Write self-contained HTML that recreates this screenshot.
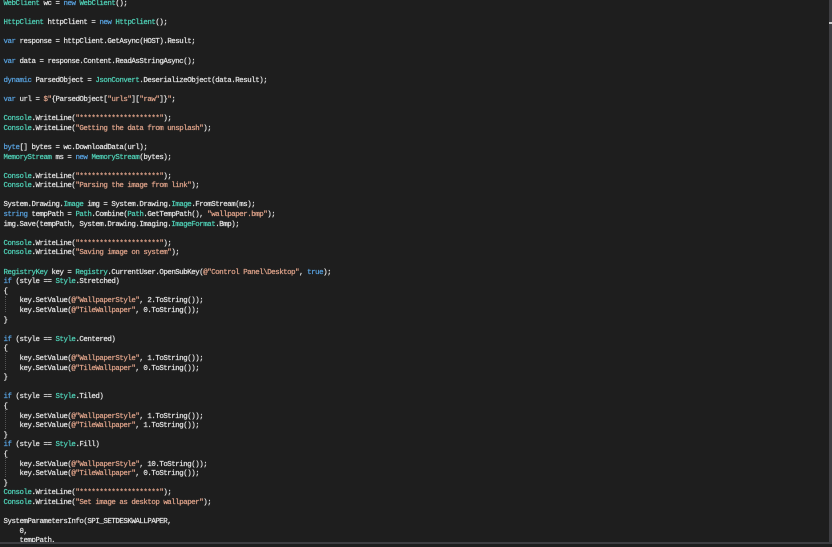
<!DOCTYPE html>
<html><head><meta charset="utf-8">
<style>
html,body{margin:0;padding:0;background:#1e1e1e;width:832px;height:544px;overflow:hidden}
pre{position:absolute;left:3.5px;top:0;margin:0;font-family:"Liberation Mono",monospace;font-size:7.4px;letter-spacing:-.44px;line-height:9.6px;color:#dcdcdc;filter:blur(.3px);-webkit-text-stroke:.15px currentColor;text-shadow:0 0 .4px currentColor}
.t{color:#4ec9b0}.k{color:#569cd6}.s{color:#d69d85}
.g{position:absolute;left:5px;width:0;border-left:1px dotted #555}
#r{position:absolute;left:829px;top:0;width:3px;height:544px;background:#3e3e42}
#b{position:absolute;left:0;top:542px;width:832px;height:2px;background:#3e3e42}
#m{position:absolute;left:829px;top:22px;width:3px;height:2px;background:#c8c8c8}
</style></head><body>
<pre><span class="t">WebClient</span> wc = <span class="k">new</span> <span class="t">WebClient</span>();

<span class="t">HttpClient</span> httpClient = <span class="k">new</span> <span class="t">HttpClient</span>();

<span class="k">var</span> response = httpClient.GetAsync(HOST).Result;

<span class="k">var</span> data = response.Content.ReadAsStringAsync();

<span class="k">dynamic</span> ParsedObject = <span class="t">JsonConvert</span>.DeserializeObject(data.Result);

<span class="k">var</span> url = <span class="s">$"</span>{ParsedObject[<span class="s">"urls"</span>][<span class="s">"raw"</span>]}<span class="s">"</span>;

<span class="t">Console</span>.WriteLine(<span class="s">"********************"</span>);
<span class="t">Console</span>.WriteLine(<span class="s">"Getting the data from unsplash"</span>);

<span class="k">byte</span>[] bytes = wc.DownloadData(url);
<span class="t">MemoryStream</span> ms = <span class="k">new</span> <span class="t">MemoryStream</span>(bytes);

<span class="t">Console</span>.WriteLine(<span class="s">"********************"</span>);
<span class="t">Console</span>.WriteLine(<span class="s">"Parsing the image from link"</span>);

System.Drawing.<span class="t">Image</span> img = System.Drawing.<span class="t">Image</span>.FromStream(ms);
<span class="k">string</span> tempPath = <span class="t">Path</span>.Combine(<span class="t">Path</span>.GetTempPath(), <span class="s">"wallpaper.bmp"</span>);
img.Save(tempPath, System.Drawing.Imaging.<span class="t">ImageFormat</span>.Bmp);

<span class="t">Console</span>.WriteLine(<span class="s">"********************"</span>);
<span class="t">Console</span>.WriteLine(<span class="s">"Saving image on system"</span>);

<span class="t">RegistryKey</span> key = <span class="t">Registry</span>.CurrentUser.OpenSubKey(<span class="s">@"Control Panel\Desktop"</span>, <span class="k">true</span>);
<span class="k">if</span> (style == <span class="t">Style</span>.Stretched)
{
    key.SetValue(<span class="s">@"WallpaperStyle"</span>, 2.ToString());
    key.SetValue(<span class="s">@"TileWallpaper"</span>, 0.ToString());
}

<span class="k">if</span> (style == <span class="t">Style</span>.Centered)
{
    key.SetValue(<span class="s">@"WallpaperStyle"</span>, 1.ToString());
    key.SetValue(<span class="s">@"TileWallpaper"</span>, 0.ToString());
}

<span class="k">if</span> (style == <span class="t">Style</span>.Tiled)
{
    key.SetValue(<span class="s">@"WallpaperStyle"</span>, 1.ToString());
    key.SetValue(<span class="s">@"TileWallpaper"</span>, 1.ToString());
}
<span class="k">if</span> (style == <span class="t">Style</span>.Fill)
{
    key.SetValue(<span class="s">@"WallpaperStyle"</span>, 10.ToString());
    key.SetValue(<span class="s">@"TileWallpaper"</span>, 0.ToString());
}
<span class="t">Console</span>.WriteLine(<span class="s">"********************"</span>);
<span class="t">Console</span>.WriteLine(<span class="s">"Set image as desktop wallpaper"</span>);

SystemParametersInfo(SPI_SETDESKWALLPAPER,
    0,
    tempPath,</pre>
<div class="g" style="top:296px;height:16px"></div>
<div class="g" style="top:353px;height:17px"></div>
<div class="g" style="top:410px;height:19px"></div>
<div class="g" style="top:458px;height:19px"></div>
<div id="r"></div><div id="m"></div><div id="b"></div>
</body></html>
